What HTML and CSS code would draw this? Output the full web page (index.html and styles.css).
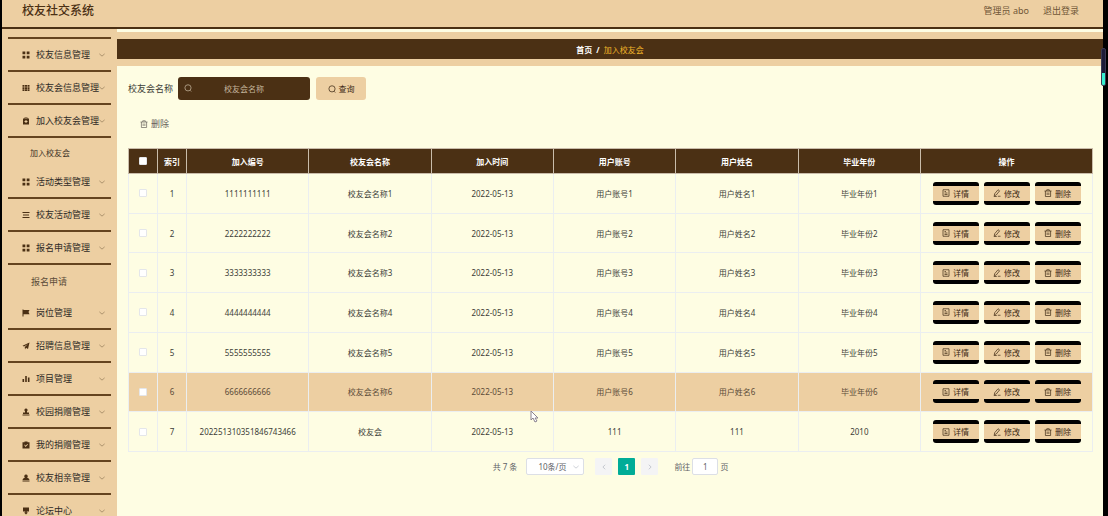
FILE: index.html
```html
<!DOCTYPE html>
<html lang="zh-CN">
<head>
  <meta charset="UTF-8">
  <meta name="viewport" content="width=device-width, initial-scale=1.0">
  <title>校友社交系统</title>
  <link rel="stylesheet" href="styles.css">
</head>
<body>
  <!-- Shared icons -->
  <svg class="sprite" aria-hidden="true">
    <symbol id="i-grid" viewBox="0 0 16 16"><path fill="currentColor" d="M1 1h5.600v5.600H1zM9.400 1H15v5.600H9.400zM1 9.400h5.600V15H1zM9.400 9.400H15V15H9.400z"/></symbol>
    <symbol id="i-grid9" viewBox="0 0 16 16"><path fill="currentColor" d="M1 2h4v3.500H1zM6 2h4v3.500H6zM11 2h4v3.500h-4zM1 6.300h4v3.500H1zM6 6.300h4v3.500H6zM11 6.300h4v3.500h-4zM1 10.600h4V14H1zM6 10.600h4V14H6zM11 10.600h4V14h-4z"/></symbol>
    <symbol id="i-case" viewBox="0 0 16 16"><path fill="currentColor" fill-rule="evenodd" d="M5 1h6v2h3v12H2V3h3zM6.500 2.200V3h3v-.8zM7 6v2H5v2h2v2h2v-2h2V8H9V6z"/></symbol>
    <symbol id="i-list" viewBox="0 0 16 16"><path fill="currentColor" d="M1 2h14v2.200H1zM2 7h12v2.200H2zM1 12h14v2.200H1z"/></symbol>
    <symbol id="i-flag" viewBox="0 0 16 16"><path fill="currentColor" d="M1 1h2v1h12l-2 4 2 4.500H3V15H1z"/></symbol>
    <symbol id="i-send" viewBox="0 0 16 16"><path fill="currentColor" d="M15 1 12 14l-4-2.500L6 15l-.5-5L12 4 4 9 1 7.500z"/></symbol>
    <symbol id="i-chart" viewBox="0 0 16 16"><path fill="currentColor" d="M1 8h3.200v6H1zM6.400 2h3.200v12H6.400zM11.800 5H15v9h-3.200z"/></symbol>
    <symbol id="i-stamp" viewBox="0 0 16 16"><path fill="currentColor" d="M8 1a3.200 3.200 0 0 1 2 5.700L10 9h4v3H2V9h4l0-2.300A3.200 3.200 0 0 1 8 1zM1 13h14v2H1z"/></symbol>
    <symbol id="i-check" viewBox="0 0 16 16"><path fill="currentColor" fill-rule="evenodd" d="M5 1h6v1.500h4V15H1V2.500h4zM4.500 8 7 12l5-5-1.200-1.200L7.200 9.500 5.800 7z"/></symbol>
    <symbol id="i-user" viewBox="0 0 16 16"><path fill="currentColor" d="M8 1a3.600 3.600 0 0 1 2.200 6.400c2.600.6 4.300 2 4.800 4.600H1c.5-2.600 2.200-4 4.800-4.600A3.600 3.600 0 0 1 8 1zM1 13h14v1.800H1z"/></symbol>
    <symbol id="i-board" viewBox="0 0 16 16"><path fill="currentColor" d="M2 1h12v8H9.500v2H12l-4 4-4-4h2.500V9H2z"/></symbol>
    <symbol id="i-down" viewBox="0 0 16 16"><path fill="none" stroke="currentColor" stroke-width="2" d="m1 5 7 6 7-6"/></symbol>
    <symbol id="i-left" viewBox="0 0 16 16"><path fill="none" stroke="currentColor" stroke-width="2.500" d="M11 2 5 8l6 6"/></symbol>
    <symbol id="i-right" viewBox="0 0 16 16"><path fill="none" stroke="currentColor" stroke-width="2.500" d="m5 2 6 6-6 6"/></symbol>
    <symbol id="i-search" viewBox="0 0 16 16"><path fill="none" stroke="currentColor" stroke-width="1.500" d="M8 1.500a6.200 6.200 0 1 1 0 12.400A6.200 6.200 0 0 1 8 1.500zM12 12.500l2.500 2.500"/></symbol>
    <symbol id="i-trash" viewBox="0 0 16 16"><path fill="none" stroke="currentColor" stroke-width="1.400" d="M1 4h14M5.500 4V1.500h5V4M2.800 4v11h10.400V4M6.300 7v5M9.700 7v5"/></symbol>
    <symbol id="i-doc" viewBox="0 0 16 16"><path fill="none" stroke="currentColor" stroke-width="1.400" d="M2 1.500h12v13H2zM5 5h3M5 8h6M5 11h6"/></symbol>
    <symbol id="i-edit" viewBox="0 0 16 16"><path fill="none" stroke="currentColor" stroke-width="1.400" d="m10 1.500 3.200 2.200L6.500 12l-4 1.500.8-4zM1.500 15h6M9.500 14.500H15"/></symbol>
  </svg>

  <div class="page">
    <header class="header">
      <h1>校友社交系统</h1>
      <nav class="account">
        <span>管理员 abo</span>
        <a href="#">退出登录</a>
      </nav>
    </header>

    <div class="layout">
      <!-- Side menu -->
      <aside class="sidebar">
        <ul class="menu">
          <li><a class="menu-title" href="#"><svg class="icon"><use href="#i-grid"/></svg>校友信息管理<svg class="arrow"><use href="#i-down"/></svg></a></li>
          <li><a class="menu-title" href="#"><svg class="icon"><use href="#i-grid9"/></svg>校友会信息管理<svg class="arrow"><use href="#i-down"/></svg></a></li>
          <li>
            <a class="menu-title" href="#"><svg class="icon"><use href="#i-case"/></svg>加入校友会管理<svg class="arrow"><use href="#i-down"/></svg></a>
            <a class="submenu submenu-active" href="#">加入校友会</a>
          </li>
          <li><a class="menu-title" href="#"><svg class="icon"><use href="#i-grid"/></svg>活动类型管理<svg class="arrow"><use href="#i-down"/></svg></a></li>
          <li><a class="menu-title" href="#"><svg class="icon"><use href="#i-list"/></svg>校友活动管理<svg class="arrow"><use href="#i-down"/></svg></a></li>
          <li>
            <a class="menu-title" href="#"><svg class="icon"><use href="#i-grid"/></svg>报名申请管理<svg class="arrow"><use href="#i-down"/></svg></a>
            <a class="submenu" href="#">报名申请</a>
          </li>
          <li><a class="menu-title" href="#"><svg class="icon"><use href="#i-flag"/></svg>岗位管理<svg class="arrow"><use href="#i-down"/></svg></a></li>
          <li><a class="menu-title" href="#"><svg class="icon"><use href="#i-send"/></svg>招聘信息管理<svg class="arrow"><use href="#i-down"/></svg></a></li>
          <li><a class="menu-title" href="#"><svg class="icon"><use href="#i-chart"/></svg>项目管理<svg class="arrow"><use href="#i-down"/></svg></a></li>
          <li><a class="menu-title" href="#"><svg class="icon"><use href="#i-stamp"/></svg>校园捐赠管理<svg class="arrow"><use href="#i-down"/></svg></a></li>
          <li><a class="menu-title" href="#"><svg class="icon"><use href="#i-check"/></svg>我的捐赠管理<svg class="arrow"><use href="#i-down"/></svg></a></li>
          <li><a class="menu-title" href="#"><svg class="icon"><use href="#i-user"/></svg>校友相亲管理<svg class="arrow"><use href="#i-down"/></svg></a></li>
          <li><a class="menu-title" href="#"><svg class="icon"><use href="#i-board"/></svg>论坛中心<svg class="arrow"><use href="#i-down"/></svg></a></li>
        </ul>
      </aside>

      <main class="main">
        <div class="breadcrumb-wrap">
          <nav class="breadcrumb"><a href="#">首页</a><b>/</b><span>加入校友会</span></nav>
        </div>

        <div class="content">
          <!-- Search form -->
          <form class="search">
            <label for="name">校友会名称</label>
            <div class="search-box">
              <svg class="icon"><use href="#i-search"/></svg>
              <input id="name" type="text" placeholder="校友会名称">
            </div>
            <button type="button" class="search-button"><svg class="icon"><use href="#i-search"/></svg>查询</button>
          </form>

          <div class="toolbar">
            <button type="button" class="delete-button"><svg class="icon"><use href="#i-trash"/></svg>删除</button>
          </div>

          <!-- Data table -->
          <table class="table">
            <colgroup>
              <col class="col-small"><col class="col-small">
              <col><col><col><col><col><col>
              <col class="col-actions">
            </colgroup>
            <thead>
              <tr>
                <th><input type="checkbox" aria-label="全选"></th>
                <th>索引</th>
                <th>加入编号</th>
                <th>校友会名称</th>
                <th>加入时间</th>
                <th>用户账号</th>
                <th>用户姓名</th>
                <th>毕业年份</th>
                <th>操作</th>
              </tr>
            </thead>
            <tbody>
              <tr>
                <td><input type="checkbox" aria-label="选择1"></td>
                <td>1</td><td>1111111111</td><td>校友会名称1</td><td>2022-05-13</td><td>用户账号1</td><td>用户姓名1</td><td>毕业年份1</td>
                <td><div class="actions">
                  <button type="button"><svg class="icon"><use href="#i-doc"/></svg>详情</button>
                  <button type="button"><svg class="icon"><use href="#i-edit"/></svg>修改</button>
                  <button type="button"><svg class="icon"><use href="#i-trash"/></svg>删除</button>
                </div></td>
              </tr>
              <tr>
                <td><input type="checkbox" aria-label="选择2"></td>
                <td>2</td><td>2222222222</td><td>校友会名称2</td><td>2022-05-13</td><td>用户账号2</td><td>用户姓名2</td><td>毕业年份2</td>
                <td><div class="actions">
                  <button type="button"><svg class="icon"><use href="#i-doc"/></svg>详情</button>
                  <button type="button"><svg class="icon"><use href="#i-edit"/></svg>修改</button>
                  <button type="button"><svg class="icon"><use href="#i-trash"/></svg>删除</button>
                </div></td>
              </tr>
              <tr>
                <td><input type="checkbox" aria-label="选择3"></td>
                <td>3</td><td>3333333333</td><td>校友会名称3</td><td>2022-05-13</td><td>用户账号3</td><td>用户姓名3</td><td>毕业年份3</td>
                <td><div class="actions">
                  <button type="button"><svg class="icon"><use href="#i-doc"/></svg>详情</button>
                  <button type="button"><svg class="icon"><use href="#i-edit"/></svg>修改</button>
                  <button type="button"><svg class="icon"><use href="#i-trash"/></svg>删除</button>
                </div></td>
              </tr>
              <tr>
                <td><input type="checkbox" aria-label="选择4"></td>
                <td>4</td><td>4444444444</td><td>校友会名称4</td><td>2022-05-13</td><td>用户账号4</td><td>用户姓名4</td><td>毕业年份4</td>
                <td><div class="actions">
                  <button type="button"><svg class="icon"><use href="#i-doc"/></svg>详情</button>
                  <button type="button"><svg class="icon"><use href="#i-edit"/></svg>修改</button>
                  <button type="button"><svg class="icon"><use href="#i-trash"/></svg>删除</button>
                </div></td>
              </tr>
              <tr>
                <td><input type="checkbox" aria-label="选择5"></td>
                <td>5</td><td>5555555555</td><td>校友会名称5</td><td>2022-05-13</td><td>用户账号5</td><td>用户姓名5</td><td>毕业年份5</td>
                <td><div class="actions">
                  <button type="button"><svg class="icon"><use href="#i-doc"/></svg>详情</button>
                  <button type="button"><svg class="icon"><use href="#i-edit"/></svg>修改</button>
                  <button type="button"><svg class="icon"><use href="#i-trash"/></svg>删除</button>
                </div></td>
              </tr>
              <tr class="row-hover">
                <td><input type="checkbox" aria-label="选择6"></td>
                <td>6</td><td>6666666666</td><td>校友会名称6</td><td>2022-05-13</td><td>用户账号6</td><td>用户姓名6</td><td>毕业年份6</td>
                <td><div class="actions">
                  <button type="button"><svg class="icon"><use href="#i-doc"/></svg>详情</button>
                  <button type="button"><svg class="icon"><use href="#i-edit"/></svg>修改</button>
                  <button type="button"><svg class="icon"><use href="#i-trash"/></svg>删除</button>
                </div></td>
              </tr>
              <tr>
                <td><input type="checkbox" aria-label="选择7"></td>
                <td>7</td><td>202251310351846743466</td><td>校友会</td><td>2022-05-13</td><td>111</td><td>111</td><td>2010</td>
                <td><div class="actions">
                  <button type="button"><svg class="icon"><use href="#i-doc"/></svg>详情</button>
                  <button type="button"><svg class="icon"><use href="#i-edit"/></svg>修改</button>
                  <button type="button"><svg class="icon"><use href="#i-trash"/></svg>删除</button>
                </div></td>
              </tr>
            </tbody>
          </table>

          <!-- Pagination -->
          <div class="pagination">
            <span>共 7 条</span>
            <div class="page-size">
              <select aria-label="每页条数"><option>10条/页</option></select>
              <svg class="arrow"><use href="#i-down"/></svg>
            </div>
            <div class="pager">
              <button type="button" disabled aria-label="上一页"><svg class="arrow"><use href="#i-left"/></svg></button>
              <button type="button" class="current">1</button>
              <button type="button" disabled aria-label="下一页"><svg class="arrow"><use href="#i-right"/></svg></button>
            </div>
            <label class="jump">前往 <input type="text" value="1"> 页</label>
          </div>
        </div>
      </main>
    </div>
  </div>

  <div class="meter"></div>
  <svg class="cursor" viewBox="0 0 9 13"><path d="M1 1v9l2-2 2 4 2-1-2-3h3z" fill="#fff" stroke="#8a8290"/></svg>
</body>
</html>
```
FILE: styles.css
```css
* {
  box-sizing: border-box;
}
body {
  margin: 0;
  font-family: "Noto Sans", "Noto Sans CJK SC", sans-serif;
  font-size: 9px;
  color: #3d3d38;
  background-color: #fefde3;
}
a {
  color: inherit;
  text-decoration: none;
}
button, input, select {
  font: inherit;
  color: inherit;
  margin: 0;
}
.sprite {
  position: absolute;
  width: 0;
  height: 0;
}
.icon {
  width: 8px;
  height: 8px;
  flex: none;
}
.arrow {
  width: 6px;
  height: 6px;
  flex: none;
  color: #98805c;
}
.page {
  display: flex;
  flex-direction: column;
  height: 100vh;
  overflow: hidden;
  border: solid #000;
  border-width: 0 5px 0 2px;
}

/* header */
.header {
  display: flex;
  flex: none;
  align-items: center;
  justify-content: space-between;
  height: 29px;
  padding: 0 24px 6px 20px;
  background-color: #edcfa2;
  border-bottom: 2px solid #4b3014;
}
.header h1 {
  margin: 0;
  font-size: 12px;
  font-weight: 500;
  line-height: 20px;
  color: #4b3014;
}
.account {
  display: flex;
  gap: 14px;
  color: #6f5636;
}
.layout {
  display: flex;
  flex: 1;
  min-height: 0;
}

/* sidebar */
.sidebar {
  flex: none;
  width: 115px;
  padding: 8px 6px 0;
  background-color: #edcfa2;
  overflow: hidden;
}
.menu {
  margin: 0;
  padding: 0;
  list-style: none;
  border-top: 2px solid #65441f;
}
.menu-title {
  display: flex;
  align-items: center;
  height: 33px;
  padding: 0 6px 0 14px;
  white-space: nowrap;
  color: #2e2a26;
  border-bottom: 2px solid #65441f;
}
.menu-title .icon {
  margin-right: 6px;
  color: #4b3014;
}
.menu-title .arrow {
  margin-left: auto;
}
.submenu {
  display: flex;
  align-items: center;
  height: 32px;
  padding-left: 23px;
  color: #5c4c39;
}
.submenu-active {
  height: 28px;
  padding-left: 22px;
  font-size: 8px;
  color: #3d3327;
}

/* main area */
.main {
  flex: 1;
  min-width: 0;
  padding-top: 3px;
}
.breadcrumb-wrap {
  padding: 7px 0;
  background-color: #edcfa2;
}
.breadcrumb {
  display: flex;
  align-items: center;
  justify-content: center;
  gap: 4px;
  height: 20px;
  font-size: 8px;
  color: #fff;
  background-color: #4b3014;
}
.breadcrumb a {
  font-weight: bold;
}
.breadcrumb span {
  color: #f0b429;
}
.content {
  padding: 11px 10px 0 11px;
}
.search {
  display: flex;
  align-items: center;
  height: 23px;
}
.search-box {
  position: relative;
  width: 132px;
  height: 23px;
  margin: 0 6px 0 5px;
}
.search-box .icon {
  position: absolute;
  left: 6px;
  top: 7px;
  color: #c4b49c;
}
.search-box input {
  width: 100%;
  height: 100%;
  padding: 0 20px;
  font-size: 8px;
  text-align: center;
  color: #fff;
  background-color: #4b3014;
  border: 0;
  border-radius: 3px;
}
.search-box input::placeholder {
  color: #c4b49c;
}
.search-button {
  display: flex;
  align-items: center;
  justify-content: center;
  gap: 3px;
  width: 50px;
  height: 23px;
  padding: 0;
  font-size: 8px;
  color: #3d2a14;
  background-color: #edcfa2;
  border: 0;
  border-radius: 3px;
}
.toolbar {
  display: flex;
  height: 23px;
  margin: 12px 0 13px;
}
.delete-button {
  display: flex;
  align-items: center;
  gap: 3px;
  padding: 0 12px;
  color: #66605a;
  background: none;
  border: 0;
}

/* table */
.table {
  width: 100%;
  height: 304px;
  table-layout: fixed;
  border-collapse: collapse;
  font-size: 8px;
  text-align: center;
}
.col-small {
  width: 29px;
}
.col-actions {
  width: 172px;
}
.table th,
.table td {
  padding: 0;
  border: 1px solid #ebeef0;
}
.table th {
  height: 25px;
  color: #fff;
  background-color: #4b3014;
  border-color: #c9bcaa;
}
.row-hover {
  color: #5c4c39;
  background-color: #edcfa2;
}
.table input {
  display: block;
  width: 8px;
  height: 8px;
  margin: 0 auto;
  appearance: none;
  background-color: #fff;
  border: 1px solid #e4e6ea;
  border-radius: 1px;
}
.actions {
  display: flex;
  justify-content: center;
  gap: 5px;
}
.actions button {
  display: flex;
  align-items: center;
  justify-content: center;
  gap: 3px;
  width: 46px;
  height: 23px;
  padding: 0;
  color: #3d2a14;
  background-color: #edcfa2;
  border: solid #000;
  border-width: 4px 0;
  border-radius: 3px;
}

/* pagination */
.pagination {
  display: flex;
  align-items: center;
  justify-content: center;
  margin-top: 6px;
  font-size: 8px;
  color: #606266;
}
.page-size {
  position: relative;
  margin: 0 11px 0 9px;
}
.page-size select {
  display: block;
  width: 58px;
  height: 17px;
  padding: 0 16px 0 11px;
  appearance: none;
  background-color: #fff;
  border: 1px solid #dcdfe6;
  border-radius: 2px;
}
.page-size .arrow {
  position: absolute;
  right: 5px;
  top: 6px;
  color: #c0c4cc;
}
.pager {
  display: flex;
  gap: 6px;
}
.pager button {
  display: flex;
  align-items: center;
  justify-content: center;
  width: 17px;
  height: 17px;
  padding: 0;
  background-color: #f4f4f5;
  border: 0;
  border-radius: 1px;
}
.pager .arrow {
  color: #c0c4cc;
}
.pager .current {
  font-weight: bold;
  color: #fff;
  background-color: #00ac97;
}
.jump {
  display: flex;
  align-items: center;
  gap: 2px;
  margin-left: 16px;
}
.jump input {
  width: 26px;
  height: 17px;
  padding: 0;
  text-align: center;
  background-color: #fff;
  border: 1px solid #dcdfe6;
  border-radius: 2px;
}

/* floating widgets */
.meter {
  position: fixed;
  right: 2px;
  top: 48px;
  width: 5px;
  height: 38px;
  border: 1px solid #3a3a50;
  border-radius: 2px;
  background: linear-gradient(#1e1c38 66%, #35f0d0 66%);
}
.cursor {
  position: absolute;
  left: 530px;
  top: 410px;
  width: 9px;
  height: 13px;
}
```
